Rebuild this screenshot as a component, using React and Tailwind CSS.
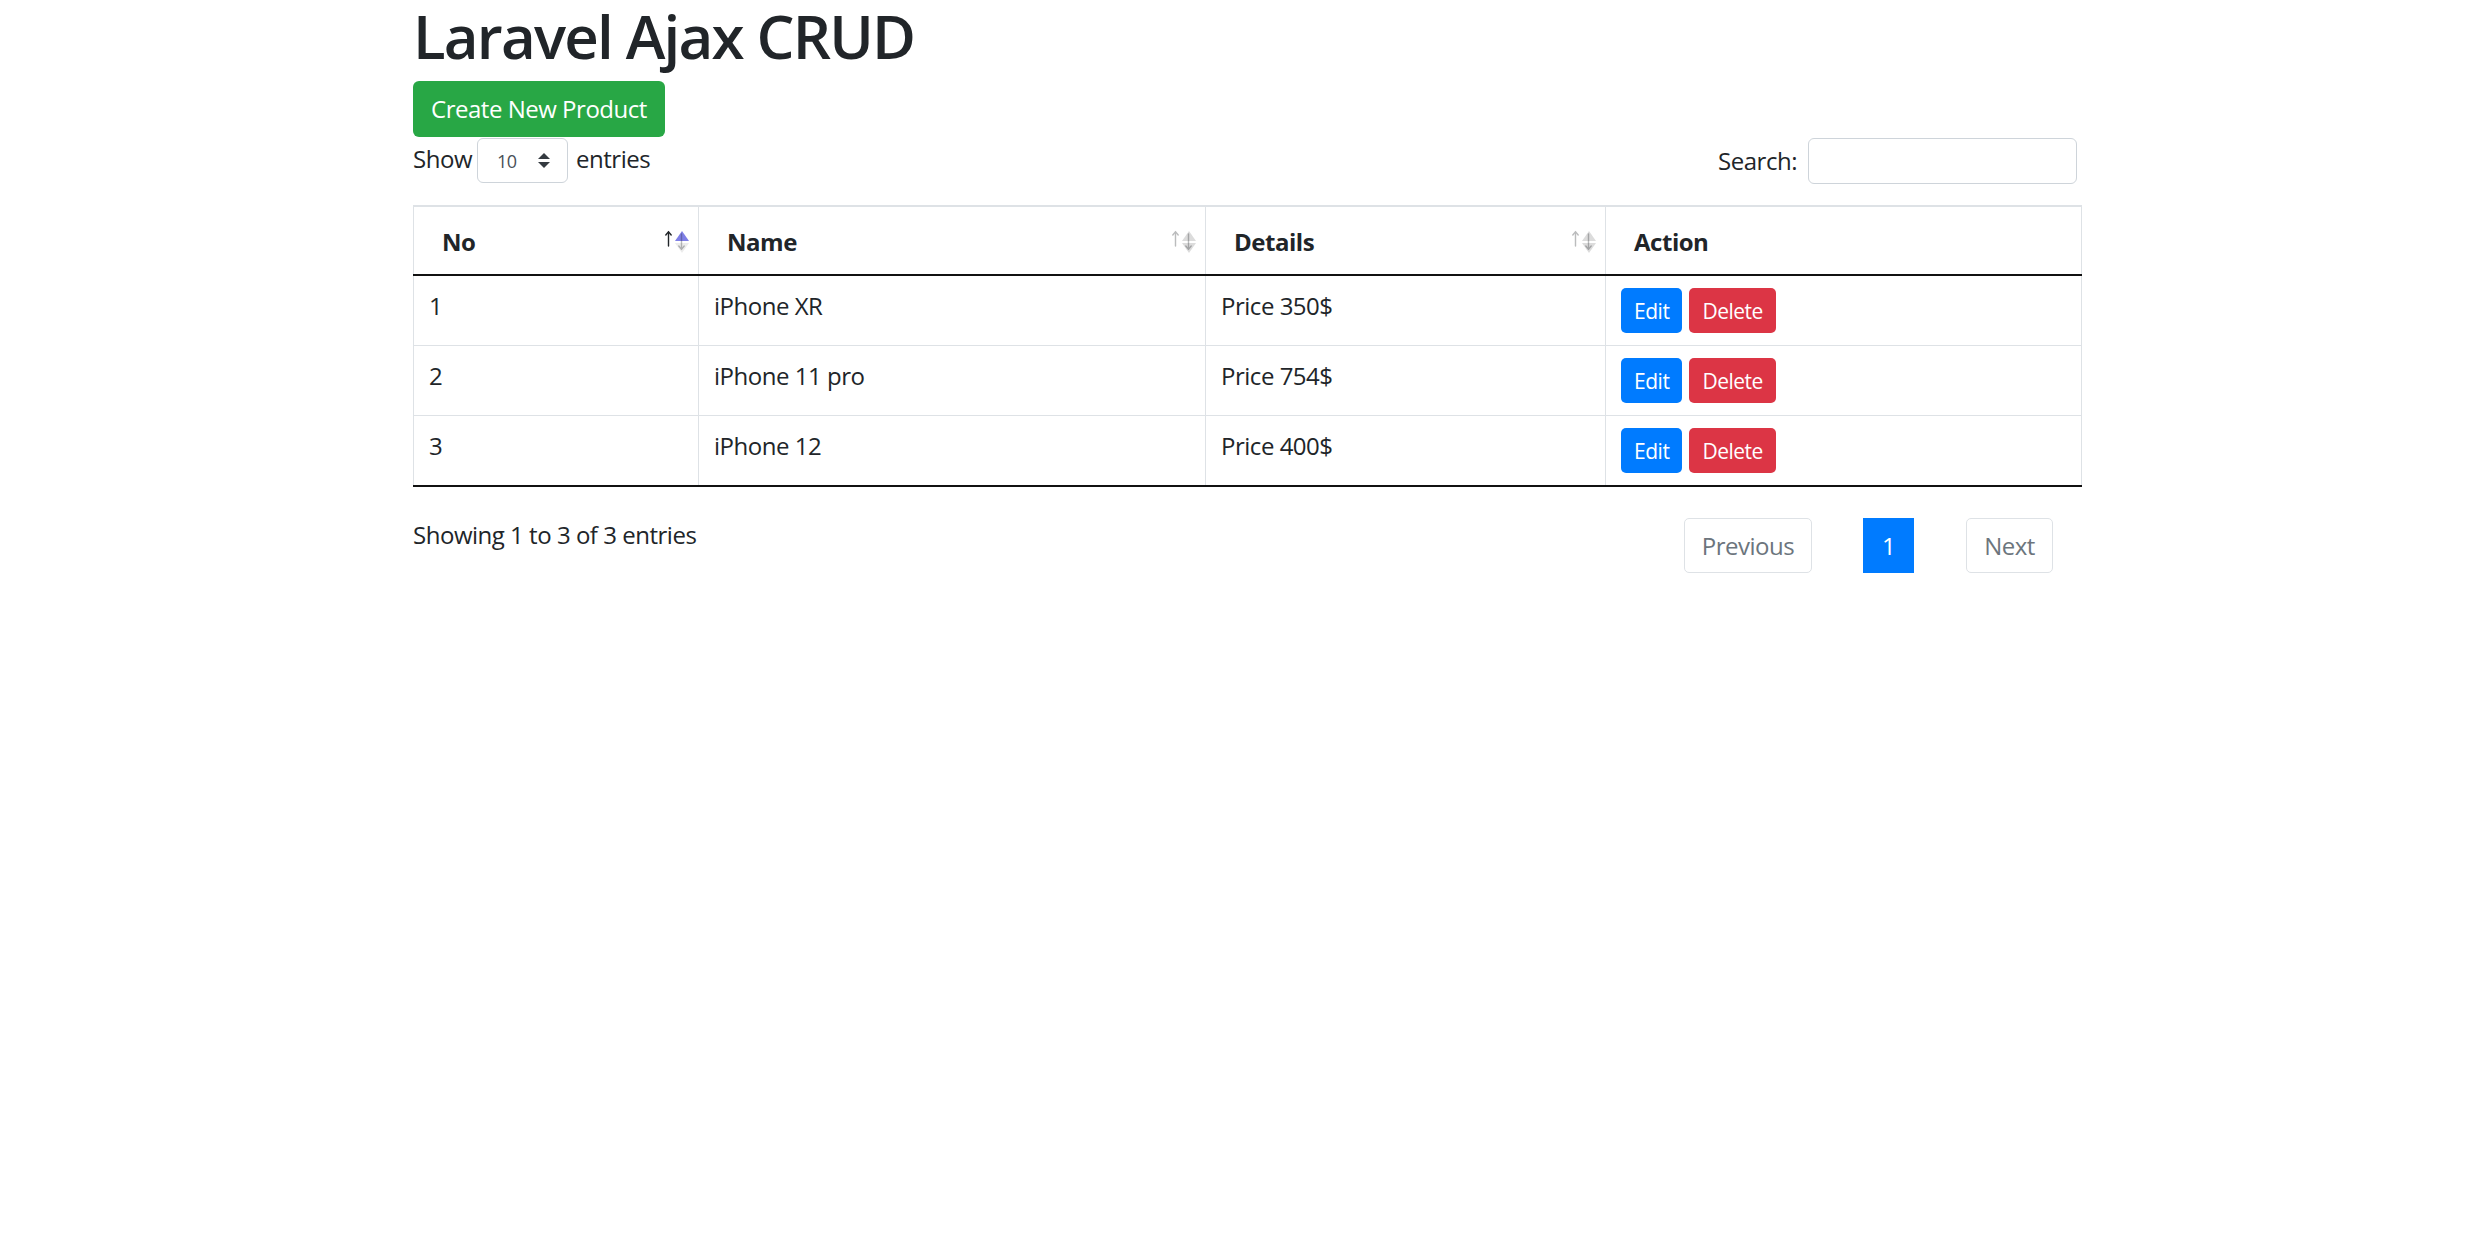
import React from "react";

const products = [
  { no: 1, name: "iPhone XR", details: "Price 350$" },
  { no: 2, name: "iPhone 11 pro", details: "Price 754$" },
  { no: 3, name: "iPhone 12", details: "Price 400$" },
];

const columns = [
  { label: "No", sort: "asc" },
  { label: "Name", sort: "both" },
  { label: "Details", sort: "both" },
  { label: "Action", sort: null },
];

// datatables style sort marker: png triangles underneath, unicode arrows on top
function SortMarker({ active }) {
  return (
    <svg width="26" height="24" viewBox="0 0 26 24" className="shrink-0">
      <polygon points="18,1 25,11 11,11" fill={active ? "#7f7fe6" : "#dcdcdc"} />
      <polygon points="11,13 25,13 18,23" fill={active ? "#ececec" : "#dcdcdc"} />
      <g stroke="#212529" strokeWidth="1.4" fill="none" strokeLinecap="round">
        <g opacity={active ? 1 : 0.3}>
          <line x1="4.5" y1="2" x2="4.5" y2="16" />
          <polyline points="1.8,5 4.5,1.8 7.2,5" />
        </g>
        <g opacity="0.3">
          <line x1="17.5" y1="4" x2="17.5" y2="19" />
          <polyline points="14.8,16 17.5,19.2 20.2,16" />
        </g>
      </g>
    </svg>
  );
}

function LengthSelect() {
  return (
    <div className="inline-flex h-[45px] w-[91px] items-center justify-between rounded-[6px] border border-[#ced4da] bg-white pl-[19px] pr-[17px] text-[18px] leading-[24px] text-[#495057]">
      <span>10</span>
      <svg width="12" height="15" viewBox="0 0 12 15">
        <polygon points="6,0 12,6 0,6" fill="#343a40" />
        <polygon points="0,9 12,9 6,15" fill="#343a40" />
      </svg>
    </div>
  );
}

export default function App() {
  return (
    <div className="min-h-screen bg-white font-['Open_Sans','Noto_Sans',sans-serif] text-[24px] leading-[36px] tracking-[-0.02em] text-[#212529]">
      <div className="mx-auto w-[1660px]">
        <h1 className="mb-[9px] h-[72px] text-[60px] font-semibold leading-[72px] tracking-[-0.03em]">
          Laravel Ajax CRUD
        </h1>

        <button className="flex h-[56px] items-center rounded-[6px] bg-[#28a745] px-[18px] text-white">
          Create New Product
        </button>

        {/* length + search controls */}
        <div className="mt-[1px] flex h-[46px] w-[1664px] items-start justify-between">
          <div className="flex items-baseline">
            <span>Show</span>
            <span className="ml-[5px]">
              <LengthSelect />
            </span>
            <span className="ml-[8px]">entries</span>
          </div>
          <div className="flex items-center">
            <span>Search:</span>
            <input
              type="search"
              className="ml-[11px] h-[46px] w-[269px] rounded-[6px] border border-[#ced4da] bg-white px-[12px] outline-none"
            />
          </div>
        </div>

        <table className="mt-[21px] w-[1668px] table-fixed border-collapse">
          <colgroup>
            <col className="w-[285px]" />
            <col className="w-[507px]" />
            <col className="w-[400px]" />
            <col className="w-[476px]" />
          </colgroup>
          <thead>
            <tr>
              {columns.map((col) => (
                <th
                  key={col.label}
                  className="h-[69px] border border-t-2 border-b-2 border-[#dee2e6] border-b-[#111] pt-[3px] pb-0 pl-[28px] pr-[8px] text-left align-middle font-bold"
                >
                  <div className="flex items-center justify-between">
                    <span>{col.label}</span>
                    {col.sort && <SortMarker active={col.sort === "asc"} />}
                  </div>
                </th>
              ))}
            </tr>
          </thead>
          <tbody>
            {products.map((p, i) => {
              const last = i === products.length - 1;
              const cell = `border border-[#dee2e6] px-[15px] pt-[12px] pb-[12px] align-top ${
                last ? "border-b-2 border-b-[#111]" : ""
              }`;
              return (
                <tr key={p.no}>
                  <td className={cell}>{p.no}</td>
                  <td className={cell}>{p.name}</td>
                  <td className={cell}>{p.details}</td>
                  <td className={cell}>
                    <div className="flex">
                      <button className="flex h-[45px] items-center rounded-[5px] bg-[#007bff] px-[13px] text-[21px] text-white">
                        Edit
                      </button>
                      <button className="ml-[7px] flex h-[45px] items-center rounded-[5px] bg-[#dc3545] px-[13px] text-[21px] text-white">
                        Delete
                      </button>
                    </div>
                  </td>
                </tr>
              );
            })}
          </tbody>
        </table>

        {/* info + pagination */}
        <div className="flex w-[1668px] items-start justify-between">
          <div className="mt-[30px]">Showing 1 to 3 of 3 entries</div>
          <div className="mr-[28px] mt-[31px] flex items-center text-[#6c757d]">
            <span className="flex h-[55px] w-[128px] items-center justify-center rounded-[5px] border border-[#dee2e6]">
              Previous
            </span>
            <span className="ml-[51px] flex h-[55px] w-[51px] items-center justify-center bg-[#007bff] text-white">
              1
            </span>
            <span className="ml-[52px] flex h-[55px] w-[87px] items-center justify-center rounded-[5px] border border-[#dee2e6]">
              Next
            </span>
          </div>
        </div>
      </div>
    </div>
  );
}
